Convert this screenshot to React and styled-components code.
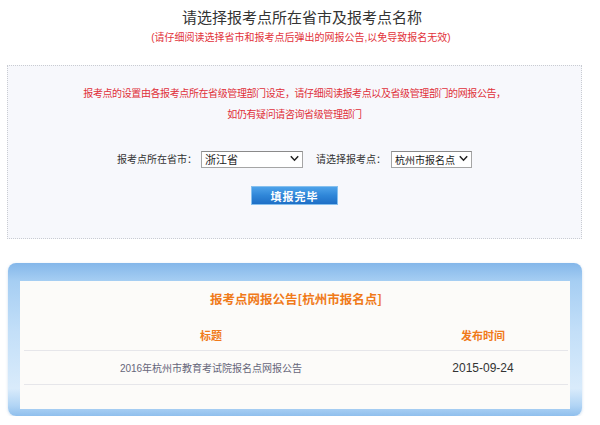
import React from 'react';
import styled, { createGlobalStyle } from 'styled-components';

const GlobalStyle = createGlobalStyle`
  body {
    margin: 0;
    background: #ffffff;
    font-family: "Liberation Sans", "Noto Sans CJK SC", sans-serif;
  }
`;

const Page = styled.div`
  width: 600px;
  padding-top: 7px;
`;

const Heading = styled.h1`
  margin: 0;
  text-align: center;
  font-size: 15px;
  line-height: 20px;
  font-weight: normal;
  color: #333333;
  font-family: "Noto Sans CJK SC", sans-serif;
  padding-left: 4px;
`;

const Notice = styled.p`
  margin: 3px 0 0;
  text-align: center;
  font-size: 10px;
  line-height: 16px;
  color: #e2323a;
  font-family: "Liberation Sans", "Noto Sans CJK SC", sans-serif;
  padding-left: 2px;
`;

const SelectBox = styled.div`
  margin: 19px 0 0 7px;
  width: 573px;
  border: 1px dotted #c9ccd2;
  background: #f7f8fc;
  padding: 16px 0 33px;
  display: flex;
  flex-direction: column;
  align-items: center;
`;

const Warning = styled.p`
  margin: 0;
  text-align: center;
  font-size: 10px;
  line-height: 21px;
  letter-spacing: -0.4px;
  color: #e0303a;
  font-family: "Noto Sans CJK SC", sans-serif;
`;

const FieldRow = styled.div`
  margin-top: 26px;
  display: flex;
  align-items: center;
  height: 17px;
`;

const Label = styled.span`
  font-size: 10px;
  color: #333333;
  font-family: "Noto Sans CJK SC", sans-serif;
  margin-right: ${(p) => p.$gap || 4}px;
  margin-left: ${(p) => p.$lead || 0}px;
`;

const SelectWrap = styled.div`
  position: relative;
  width: ${(p) => p.$width}px;
  height: 17px;
`;

const Select = styled.select`
  appearance: none;
  width: 100%;
  height: 17px;
  box-sizing: border-box;
  border: 1px solid #a5a5a5;
  border-top-color: #8a8a8a;
  background: #ffffff;
  padding: 0 0 0 3px;
  margin: 0;
  font-size: ${(p) => p.$size || 11}px;
  line-height: 15px;
  color: #222222;
  font-family: "Noto Sans CJK SC", sans-serif;
  border-radius: 0;
  outline: none;
`;

const Chevron = styled.svg`
  position: absolute;
  right: 4px;
  top: 5px;
  pointer-events: none;
`;

const SubmitButton = styled.button`
  margin-top: 19px;
  width: 87px;
  height: 19px;
  padding: 0;
  border: 1px solid #86c0ee;
  background: linear-gradient(to bottom, #4ea3ea 0%, #2f86d8 50%, #1e6fc6 100%);
  color: #ffffff;
  font-size: 11px;
  font-weight: bold;
  letter-spacing: 1px;
  font-family: "Noto Sans CJK SC", sans-serif;
  cursor: pointer;
`;

const Panel = styled.div`
  margin: 24px 0 0 8px;
  width: 574px;
  box-sizing: border-box;
  padding: 18px 12px 7px;
  border-radius: 8px;
  background: linear-gradient(
    to bottom,
    #84b7ea 0px,
    #a6cef3 18px,
    #c3dff8 45%,
    #d9ebfb 82%,
    #b2d5f5 93%,
    #8fbfed 100%
  );
  box-shadow: 0 1px 3px rgba(110, 160, 210, 0.35);
`;

const PanelBody = styled.div`
  background: #fcfbf9;
  height: 128px;
  box-sizing: border-box;
  padding: 8px 2px 0 4px;
`;

const PanelTitle = styled.h2`
  margin: 0;
  text-align: center;
  font-size: 12.5px;
  line-height: 20px;
  font-weight: bold;
  color: #f07a1a;
  font-family: "Noto Sans CJK SC", sans-serif;
`;

const Table = styled.div`
  margin-top: 10px;
  display: grid;
  grid-template-columns: 374px 170px;
`;

const Cell = styled.div`
  height: ${(p) => (p.$head ? 31 : 33)}px;
  display: flex;
  align-items: center;
  justify-content: center;
  border-bottom: 1px solid #e6e6ea;
  font-size: ${(p) => (p.$date ? 12 : p.$head ? 11 : 10)}px;
  font-weight: ${(p) => (p.$head ? 'bold' : 'normal')};
  color: ${(p) => (p.$head ? '#f07a1a' : p.$date ? '#333333' : '#66667a')};
  font-family: "Liberation Sans", "Noto Sans CJK SC", sans-serif;
`;

function ChevronIcon() {
  return (
    <Chevron width="9" height="7" viewBox="0 0 9 7">
      <path d="M0.8 1.2 L4.5 5.2 L8.2 1.2" fill="none" stroke="#222" strokeWidth="1.5" />
    </Chevron>
  );
}

export default function App() {
  return (
    <Page>
      <GlobalStyle />
      <Heading>请选择报考点所在省市及报考点名称</Heading>
      <Notice>(请仔细阅读选择省市和报考点后弹出的网报公告,以免导致报名无效)</Notice>

      <SelectBox>
        <Warning>报考点的设置由各报考点所在省级管理部门设定，请仔细阅读报考点以及省级管理部门的网报公告，</Warning>
        <Warning>如仍有疑问请咨询省级管理部门</Warning>

        <FieldRow>
          <Label $gap={4}>报考点所在省市：</Label>
          <SelectWrap $width={102}>
            <Select defaultValue="zj">
              <option value="zj">浙江省</option>
            </Select>
            <ChevronIcon />
          </SelectWrap>
          <Label $lead={13} $gap={5}>请选择报考点：</Label>
          <SelectWrap $width={81}>
            <Select $size={10} defaultValue="hz">
              <option value="hz">杭州市报名点</option>
            </Select>
            <ChevronIcon />
          </SelectWrap>
        </FieldRow>

        <SubmitButton>填报完毕</SubmitButton>
      </SelectBox>

      <Panel>
        <PanelBody>
          <PanelTitle>报考点网报公告[杭州市报名点]</PanelTitle>
          <Table>
            <Cell $head>标题</Cell>
            <Cell $head>发布时间</Cell>
            <Cell>2016年杭州市教育考试院报名点网报公告</Cell>
            <Cell $date>2015-09-24</Cell>
          </Table>
        </PanelBody>
      </Panel>
    </Page>
  );
}
